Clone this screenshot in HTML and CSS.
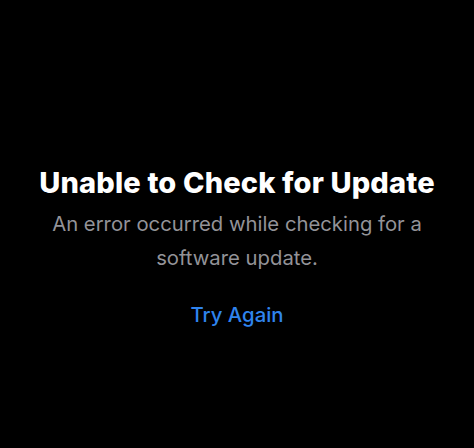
FILE: index.html
```html
<!DOCTYPE html>
<html>
<head>
<meta charset="utf-8">
<link rel="stylesheet" href="styles.css">
</head>
<body>
<main class="screen">
  <h1 class="title">Unable to Check for Update</h1>
  <p class="message">An error occurred while checking for a software update.</p>
  <a class="action">Try Again</a>
</main>
</body>
</html>
```
FILE: styles.css
```css
html, body {
  margin: 0;
  padding: 0;
  background: #000;
}
.screen {
  width: 474px;
  height: 448px;
  display: flex;
  flex-direction: column;
  align-items: center;
  font-family: Inter, "Noto Sans", sans-serif;
  text-align: center;
  padding-top: 165px;
  box-sizing: border-box;
}
.title {
  margin: 0;
  color: #fff;
  font-size: 29px;
  font-weight: 800;
  line-height: 36px;
  letter-spacing: 0.15px;
  white-space: nowrap;
}
.message {
  margin: 6px 0 0;
  width: 400px;
  color: #939398;
  font-size: 20.3px;
  font-weight: 400;
  line-height: 34px;
}
.action {
  margin-top: 26px;
  color: #2f84ee;
  font-size: 20.3px;
  font-weight: 500;
  line-height: 28px;
}
```
